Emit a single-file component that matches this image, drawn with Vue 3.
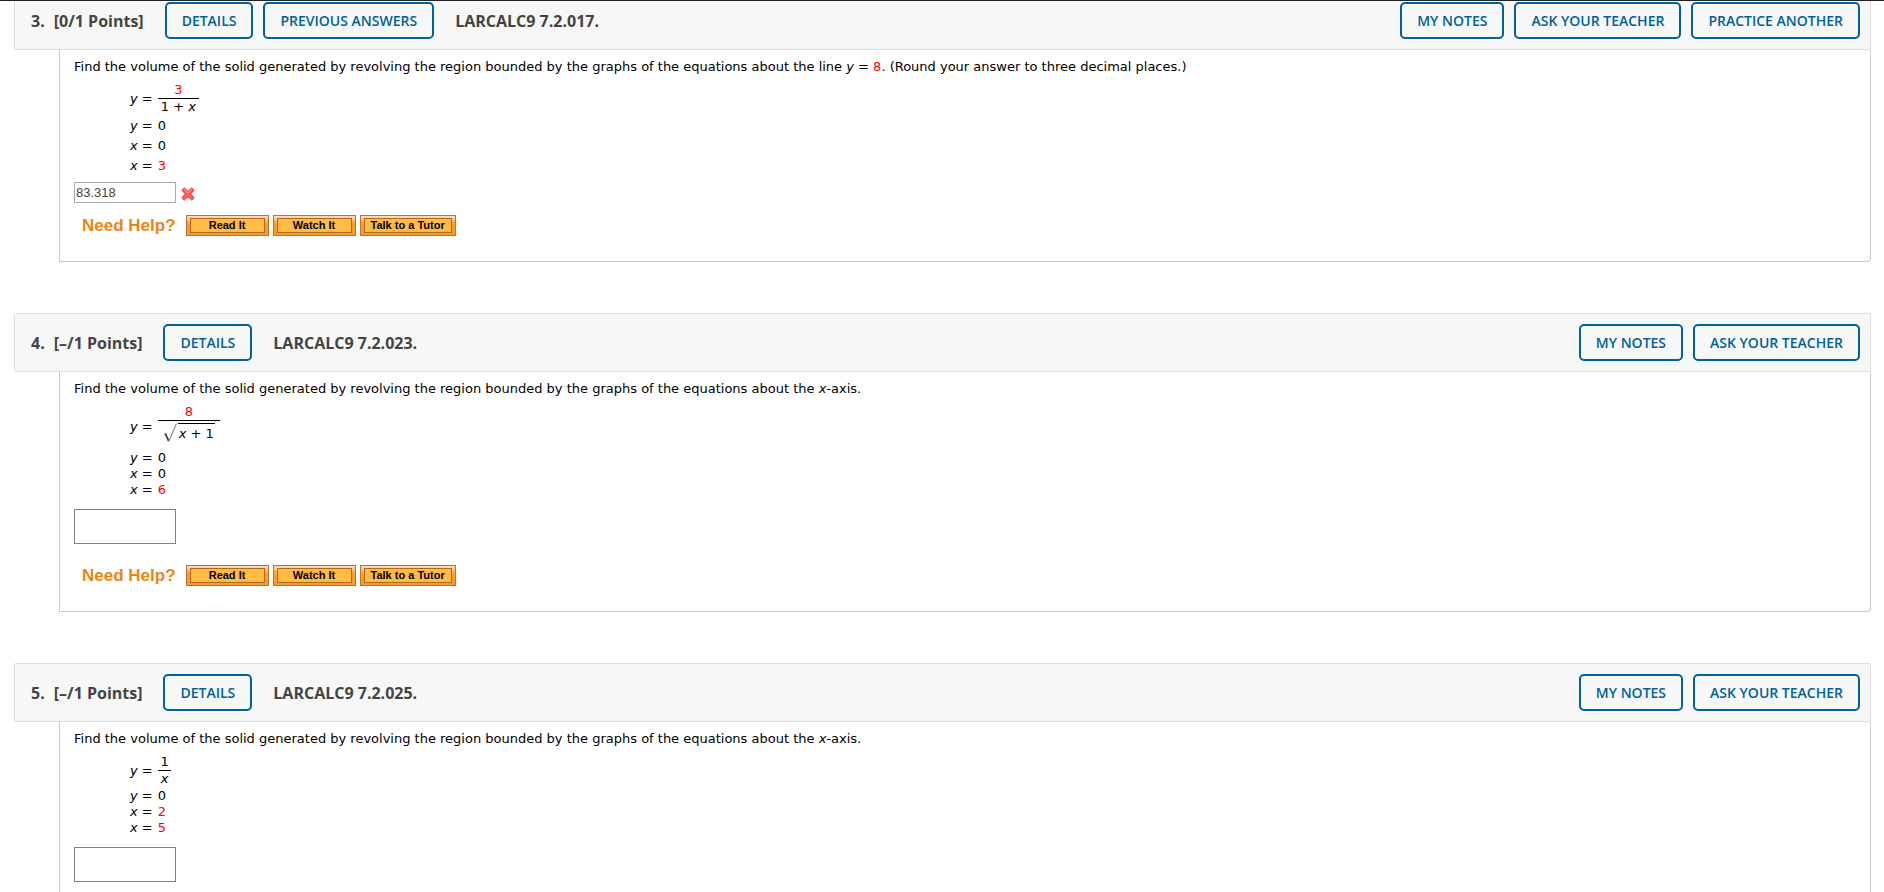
<template>
  <main class="assignment">
    <section v-for="q in questions" :key="q.number" class="question">
      <header class="question-header">
        <span class="number">{{ q.number }}.</span>
        <span class="points">[{{ q.points }} Points]</span>
        <div class="btn-group">
          <button v-for="label in q.leftButtons" :key="label" type="button" class="btn">{{ label }}</button>
        </div>
        <h2 class="code">{{ q.code }}</h2>
        <div class="btn-group right">
          <button v-for="label in q.rightButtons" :key="label" type="button" class="btn">{{ label }}</button>
        </div>
      </header>

      <div class="question-body">
        <label class="prompt" :for="'answer-' + q.number">
          Find the volume of the solid generated by revolving the region bounded by the graphs of the equations about the
          <template v-if="q.line">line <i>y</i> = <span class="random">{{ q.line }}</span>. (Round your answer to three decimal places.)</template>
          <template v-else><i>x</i>-axis.</template>
        </label>

        <div class="equations" :class="{ loose: q.graded }">
          <!-- fraction -->
          <div class="equation first">
            <span><i>y</i> =</span>
            <span class="fraction">
              <span class="numerator" :class="{ random: q.randomTop }">{{ q.top }}</span>
              <span v-if="q.bottom === 'sum'" class="denominator">1 + <i>x</i></span>
              <span v-else-if="q.bottom === 'root'" class="denominator root">
                <svg width="15" height="20" viewBox="0 0 15 20" fill="none">
                  <path d="M1 11.5L2.5 10.5" stroke="#777" />
                  <path d="M2.3 10.7L5.7 18" stroke="#444" stroke-width="1.8" />
                  <path d="M5.7 18.5L13.5 0.5" stroke="#888" stroke-width="1.1" />
                </svg>
                <span class="radicand"><i>x</i> + 1</span>
              </span>
              <span v-else class="denominator"><i>x</i></span>
            </span>
          </div>
          <div v-for="(eq, i) in q.bounds" :key="i" class="equation">
            <span><i>{{ eq.name }}</i> =</span>
            <span :class="{ random: eq.random }">{{ eq.value }}</span>
          </div>
        </div>

        <div class="answer">
          <input :id="'answer-' + q.number" v-model="q.answer" type="text" class="answer-input"
            :class="{ graded: q.graded }" :readonly="q.graded" />
          <svg v-if="q.graded" class="wrong" width="14" height="14" viewBox="0 0 14 14" role="img" aria-label="Incorrect">
            <path d="M3.2 0.8L7 4.3L10.8 0.8L13.2 3.2L9.8 7L13.2 10.8L10.8 13.2L7 9.8L3.2 13.2L0.8 10.8L4.3 7L0.8 3.2Z"
              fill="#fb5f5f" stroke="#ee3f45" stroke-width="1" stroke-linejoin="round" />
            <path d="M3.3 2.2L7 5.8L10.7 2.2" fill="none" stroke="#ff9c9c" />
          </svg>
        </div>

        <div v-if="q.help" class="help">
          <span class="help-title">Need Help?</span>
          <button v-for="label in helpButtons" :key="label" type="button" class="help-btn">
            <span class="help-btn-inner">{{ label }}</span>
          </button>
        </div>
      </div>
    </section>
  </main>
</template>

<script setup>
import { ref } from 'vue';

const helpButtons = ['Read It', 'Watch It', 'Talk to a Tutor'];

const questions = ref([
  {
    number: 3,
    points: '0/1',
    code: 'LARCALC9 7.2.017.',
    leftButtons: ['DETAILS', 'PREVIOUS ANSWERS'],
    rightButtons: ['MY NOTES', 'ASK YOUR TEACHER', 'PRACTICE ANOTHER'],
    line: '8',
    top: '3',
    randomTop: true,
    bottom: 'sum',
    bounds: [
      { name: 'y', value: '0' },
      { name: 'x', value: '0' },
      { name: 'x', value: '3', random: true }
    ],
    answer: '83.318',
    graded: true,
    help: true
  },
  {
    number: 4,
    points: '–/1',
    code: 'LARCALC9 7.2.023.',
    leftButtons: ['DETAILS'],
    rightButtons: ['MY NOTES', 'ASK YOUR TEACHER'],
    top: '8',
    randomTop: true,
    bottom: 'root',
    bounds: [
      { name: 'y', value: '0' },
      { name: 'x', value: '0' },
      { name: 'x', value: '6', random: true }
    ],
    answer: '',
    graded: false,
    help: true
  },
  {
    number: 5,
    points: '–/1',
    code: 'LARCALC9 7.2.025.',
    leftButtons: ['DETAILS'],
    rightButtons: ['MY NOTES', 'ASK YOUR TEACHER'],
    top: '1',
    randomTop: false,
    bottom: 'x',
    bounds: [
      { name: 'y', value: '0' },
      { name: 'x', value: '2', random: true },
      { name: 'x', value: '5', random: true }
    ],
    answer: '',
    graded: false,
    help: false
  }
]);
</script>

<style>
body {
  margin: 0;
  background: #fff;
}
</style>

<style scoped>
.assignment {
  box-sizing: border-box;
  height: 100vh;
  overflow: hidden;
  padding: 0 13px 0 14px;
  border-top: 1px solid #231f20;
  font-family: Verdana, "DejaVu Sans", sans-serif;
  font-size: 13px;
  color: #000;
}

.question {
  margin-bottom: 51px;
}

.question:first-child {
  margin-top: -10px;
}

.question-header {
  display: flex;
  align-items: center;
  padding: 10px 10px 10px 16px;
  background: #f7f7f7;
  border: 1px solid #dedede;
  border-radius: 2px;
  font-family: "Open Sans", sans-serif;
  font-size: 16px;
  font-weight: 700;
  color: #444;
}

.number {
  margin-right: 9px;
}

.points {
  margin-right: 21px;
}

.btn-group {
  display: flex;
  gap: 10px;
}

.btn-group.right {
  margin-left: auto;
}

.code {
  margin: 0 0 0 21px;
  font-size: 16px;
  font-weight: 700;
}

.btn {
  height: 37px;
  padding: 0 15px;
  border: 2px solid #006298;
  border-radius: 5px;
  background: transparent;
  color: #006298;
  font-family: inherit;
  font-size: 14px;
  font-weight: 600;
  cursor: pointer;
}

.question-body {
  margin-left: 45px;
  padding: 7px 14px 25px;
  border: 1px solid #c8c8c8;
  border-top: none;
  border-radius: 0 0 4px 0;
}

.question:last-child .question-body {
  padding-bottom: 60px;
}

.prompt {
  display: block;
  line-height: 20px;
}

.random {
  color: #f00;
}

.equations {
  margin: 5px 0 11px 56px;
  line-height: 16px;
}

.equations.loose {
  margin-bottom: 6px;
}

.equations.loose .equation:not(.first) {
  line-height: 20px;
}

.equation {
  display: flex;
  align-items: center;
  gap: 5px;
}

.equation.first {
  margin-bottom: 1px;
}

.fraction {
  display: flex;
  flex-direction: column;
  text-align: center;
}

.numerator {
  border-bottom: 1px solid #000;
}

.denominator {
  padding: 0 3px;
}

.denominator.root {
  display: flex;
  padding: 2px 5px 6px;
}

.radicand {
  height: 19px;
  padding: 0 1px;
  border-top: 1px solid #000;
  line-height: 19px;
}

.answer {
  display: flex;
  align-items: center;
  gap: 5px;
}

.answer-input {
  box-sizing: border-box;
  width: 102px;
  height: 35px;
  padding: 1px;
  border: 1px solid #808080;
  border-radius: 0;
  background: #fff;
  font-family: "Liberation Sans", Arial, sans-serif;
  font-size: 13px;
  color: #444;
}

.answer-input.graded {
  height: 21px;
  padding-bottom: 2px;
  border-color: #a9a9a9;
}

.wrong {
  margin-top: 2px;
}

.help {
  display: flex;
  align-items: center;
  gap: 4px;
  margin: 21px 0 0 8px;
}

.equations.loose ~ .help {
  margin-top: 12px;
}

.help-title {
  margin-right: 6px;
  font-family: "Liberation Sans", Arial, sans-serif;
  font-size: 17px;
  font-weight: 700;
  line-height: 21px;
  color: #ea8511;
}

.help-btn {
  box-sizing: border-box;
  min-width: 83px;
  height: 21px;
  padding: 2px 3px;
  border: 1px solid #b87333;
  background: linear-gradient(#ffe0bd, #fd9d2f 40%, #fd9827);
  font-family: "Liberation Sans", Arial, sans-serif;
  font-size: 11px;
  font-weight: 700;
  color: #000;
  cursor: pointer;
}

.help-btn-inner {
  display: block;
  padding: 0 6px;
  border: 1px solid #b06a20;
  background: #ffbb44;
  line-height: 13px;
}
</style>
